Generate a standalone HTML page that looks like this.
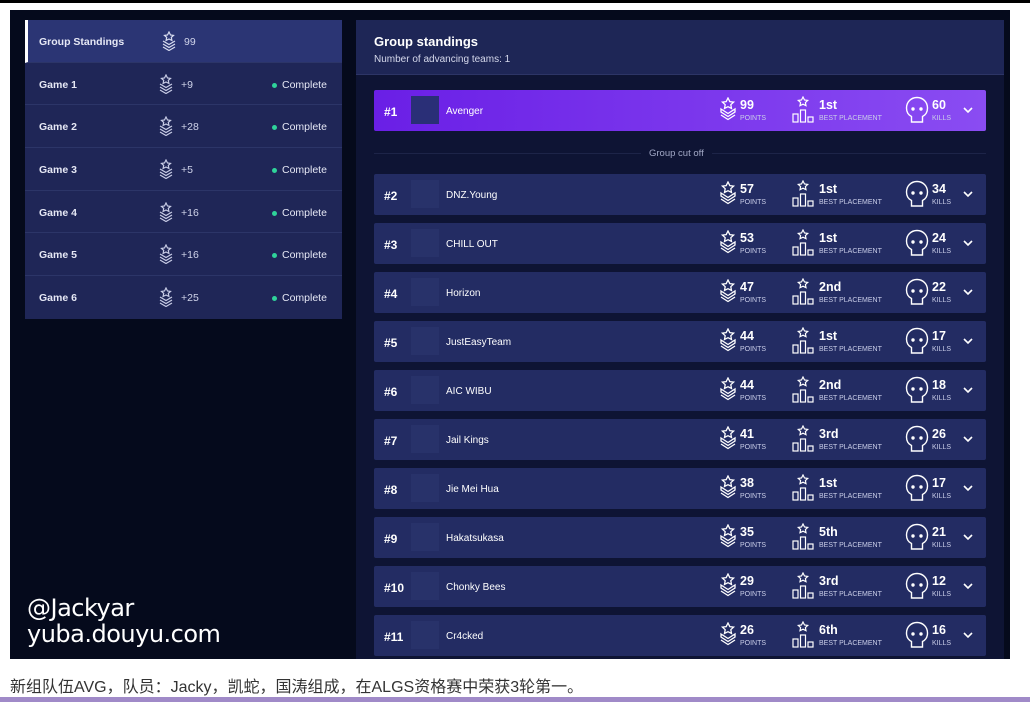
<!DOCTYPE html>
<html><head><meta charset="utf-8"><style>
*{margin:0;padding:0;box-sizing:border-box}
body{width:1030px;height:702px;background:#fff;position:relative;overflow:hidden;font-family:"Liberation Sans",sans-serif;color:#fff}
.top{position:absolute;left:0;top:0;width:1030px;height:3px;background:#000}
.shot{position:absolute;left:10px;top:10px;width:1000px;height:649px;background:#050a1c;overflow:hidden}
.lp{position:absolute;left:15px;top:10px;width:317px}
.lr{height:42.7px;background:#1f2657;border-bottom:1px solid #2c3568;position:relative;font-size:10.5px}
.lr.act{background:#2b3574;border-left:3px solid #fff}
.lr .t{position:absolute;left:14px;top:16px;font-weight:bold;color:#e6e8f5}
.lr.act .t{left:11px}
.lr .ic{position:absolute;left:134px;top:11px}
.lr .v{position:absolute;left:156px;top:16px;color:#d0d4ea}
.lr .c{position:absolute;left:257px;top:16px;color:#e6e8f5}
.lr .c:before{content:"";position:absolute;left:-10px;top:4px;width:5px;height:5px;border-radius:50%;background:#2fd39a}
.rp{position:absolute;left:346px;top:10px;width:648px;height:660px;background:#0e1434}
.rh{height:55px;background:#1e2656;border-bottom:1px solid #2d3566;padding:14px 0 0 18px}
.rh b{font-size:13px;display:block}
.rh span{font-size:10px;color:#d6d9ec}
.row{position:absolute;left:18px;width:612px;height:41px;background:#232c63;border-radius:2px}
.row.p{background:linear-gradient(90deg,#6a1fe6,#8a4cf2)}
.row .n{position:absolute;left:10px;top:15px;font-size:12px;font-weight:bold}
.row .lg{position:absolute;left:37px;top:6px;width:28px;height:28px;background:#28326a}
.row.p .lg{background:#2a2f77}
.row .nm{position:absolute;left:72px;top:16px;font-size:10px}
.row svg{position:absolute}
.row .big{position:absolute;font-size:12.5px;font-weight:bold}
.row .sm{position:absolute;font-size:7px;color:#c9cde8}
.cut{position:absolute;left:18px;top:133px;width:612px;height:1px;background:#1d2448}
.cutt{position:absolute;left:285px;top:128px;font-size:9.5px;color:#a2a8c6;background:#0e1434;padding:0 8px}
.wm{position:absolute;left:17px;top:585px;font-size:24px;line-height:26px;color:#fff;font-family:"DejaVu Sans","Liberation Sans",sans-serif;letter-spacing:-0.5px}
.cap{position:absolute;left:10px;top:673px;font-size:16px;color:#333;font-family:"Liberation Sans","Noto Sans CJK SC",sans-serif}
.bar{position:absolute;left:0;top:697px;width:1030px;height:5px;background:#a08ac8}
</style></head><body>
<div class="top"></div>
<div class="shot">
<div class="lp">
<div class="lr act"><span class="t">Group Standings</span><svg class="ic" width="14" height="20" viewBox="0 0 14 20" fill="none" stroke="#d8dcf0" stroke-width="1.2"><path d="M7 1l1.5 3 3 .4-2.2 2 .6 3L7 8l-2.9 1.4.6-3-2.2-2 3-.4z"/><path d="M1 10l6 3.5 6-3.5M1 13l6 3.5 6-3.5M1 16l6 3.5 6-3.5"/></svg><span class="v">99</span></div>
<div class="lr"><span class="t">Game 1</span><svg class="ic" width="14" height="20" viewBox="0 0 14 20" fill="none" stroke="#c8cce6" stroke-width="1.2"><path d="M7 1l1.5 3 3 .4-2.2 2 .6 3L7 8l-2.9 1.4.6-3-2.2-2 3-.4z"/><path d="M1 10l6 3.5 6-3.5M1 13l6 3.5 6-3.5M1 16l6 3.5 6-3.5"/></svg><span class="v">+9</span><span class="c">Complete</span></div>
<div class="lr"><span class="t">Game 2</span><svg class="ic" width="14" height="20" viewBox="0 0 14 20" fill="none" stroke="#c8cce6" stroke-width="1.2"><path d="M7 1l1.5 3 3 .4-2.2 2 .6 3L7 8l-2.9 1.4.6-3-2.2-2 3-.4z"/><path d="M1 10l6 3.5 6-3.5M1 13l6 3.5 6-3.5M1 16l6 3.5 6-3.5"/></svg><span class="v">+28</span><span class="c">Complete</span></div>
<div class="lr"><span class="t">Game 3</span><svg class="ic" width="14" height="20" viewBox="0 0 14 20" fill="none" stroke="#c8cce6" stroke-width="1.2"><path d="M7 1l1.5 3 3 .4-2.2 2 .6 3L7 8l-2.9 1.4.6-3-2.2-2 3-.4z"/><path d="M1 10l6 3.5 6-3.5M1 13l6 3.5 6-3.5M1 16l6 3.5 6-3.5"/></svg><span class="v">+5</span><span class="c">Complete</span></div>
<div class="lr"><span class="t">Game 4</span><svg class="ic" width="14" height="20" viewBox="0 0 14 20" fill="none" stroke="#c8cce6" stroke-width="1.2"><path d="M7 1l1.5 3 3 .4-2.2 2 .6 3L7 8l-2.9 1.4.6-3-2.2-2 3-.4z"/><path d="M1 10l6 3.5 6-3.5M1 13l6 3.5 6-3.5M1 16l6 3.5 6-3.5"/></svg><span class="v">+16</span><span class="c">Complete</span></div>
<div class="lr"><span class="t">Game 5</span><svg class="ic" width="14" height="20" viewBox="0 0 14 20" fill="none" stroke="#c8cce6" stroke-width="1.2"><path d="M7 1l1.5 3 3 .4-2.2 2 .6 3L7 8l-2.9 1.4.6-3-2.2-2 3-.4z"/><path d="M1 10l6 3.5 6-3.5M1 13l6 3.5 6-3.5M1 16l6 3.5 6-3.5"/></svg><span class="v">+16</span><span class="c">Complete</span></div>
<div class="lr" style="border-bottom:none"><span class="t">Game 6</span><svg class="ic" width="14" height="20" viewBox="0 0 14 20" fill="none" stroke="#c8cce6" stroke-width="1.2"><path d="M7 1l1.5 3 3 .4-2.2 2 .6 3L7 8l-2.9 1.4.6-3-2.2-2 3-.4z"/><path d="M1 10l6 3.5 6-3.5M1 13l6 3.5 6-3.5M1 16l6 3.5 6-3.5"/></svg><span class="v">+25</span><span class="c">Complete</span></div>
</div>

<div class="rp">
<div class="rh"><b>Group standings</b><span>Number of advancing teams: 1</span></div>
<div class="cut"></div><div class="cutt">Group cut off</div>
</div>
<div id="rows" style="position:absolute;left:346px;top:0"></div>
<div class="wm">@Jackyar<br>yuba.douyu.com</div>
</div>
<div class="cap">新组队伍AVG，队员：Jacky，凯蛇，国涛组成，在ALGS资格赛中荣获3轮第一。</div>
<div class="bar"></div>
<script>
var d=[["#1","Avenger","99","1st","60"],["#2","DNZ.Young","57","1st","34"],["#3","CHILL OUT","53","1st","24"],["#4","Horizon","47","2nd","22"],["#5","JustEasyTeam","44","1st","17"],["#6","AIC WIBU","44","2nd","18"],["#7","Jail Kings","41","3rd","26"],["#8","Jie Mei Hua","38","1st","17"],["#9","Hakatsukasa","35","5th","21"],["#10","Chonky Bees","29","3rd","12"],["#11","Cr4cked","26","6th","16"]];
var h="";
d.forEach(function(r,i){
var top=i==0?80:164+(i-1)*49;
h+='<div class="row'+(i==0?' p':'')+'" style="top:'+top+'px"><span class="n">'+r[0]+'</span><div class="lg"></div><span class="nm">'+r[1]+'</span>'+
'<svg style="left:346px;top:7px" width="16" height="26" viewBox="0 0 16 26" fill="none" stroke="#fff" stroke-width="1.3"><path d="M8 1l1.8 3.6 3.8.5-2.8 2.6.7 3.8L8 9.7l-3.5 1.8.7-3.8L2.4 5.1l3.8-.5z"/><path d="M1 12l7 4.5 7-4.5v3l-7 4.5-7-4.5zM1 18l7 4.5 7-4.5"/></svg>'+
'<span class="big" style="left:366px;top:8px">'+r[2]+'</span><span class="sm" style="left:366px;top:25px">POINTS</span>'+
'<svg style="left:417px;top:6px" width="24" height="28" viewBox="0 0 24 28" fill="none" stroke="#fff" stroke-width="1.2"><path d="M12 1l1.5 3 3.2.4-2.3 2.2.6 3.1L12 8.2l-3 1.5.6-3.1-2.3-2.2 3.2-.4z"/><rect x="9.5" y="14" width="5" height="12"/><rect x="2" y="18" width="5" height="8"/><rect x="17" y="21" width="5" height="5"/></svg>'+
'<span class="big" style="left:445px;top:8px">'+r[3]+'</span><span class="sm" style="left:445px;top:25px">BEST PLACEMENT</span>'+
'<svg style="left:531px;top:6px" width="24" height="28" viewBox="0 0 24 28" fill="none" stroke="#fff" stroke-width="1.4"><path d="M12 1.5C6 1.5 1.5 6 1.5 12c0 4 2 7 5 8.5V26h11v-5.5c3-1.5 5-4.5 5-8.5 0-6-4.5-10.5-10.5-10.5z"/><circle cx="8" cy="13" r="1" fill="#fff"/><circle cx="16" cy="13" r="1" fill="#fff"/></svg>'+
'<span class="big" style="left:558px;top:8px">'+r[4]+'</span><span class="sm" style="left:558px;top:25px">KILLS</span>'+
'<svg style="left:589px;top:17px" width="10" height="7" viewBox="0 0 10 7" fill="none" stroke="#fff" stroke-width="1.6"><path d="M1 1l4 4 4-4"/></svg></div>';
});
document.getElementById("rows").innerHTML=h;
</script>
</body></html>
